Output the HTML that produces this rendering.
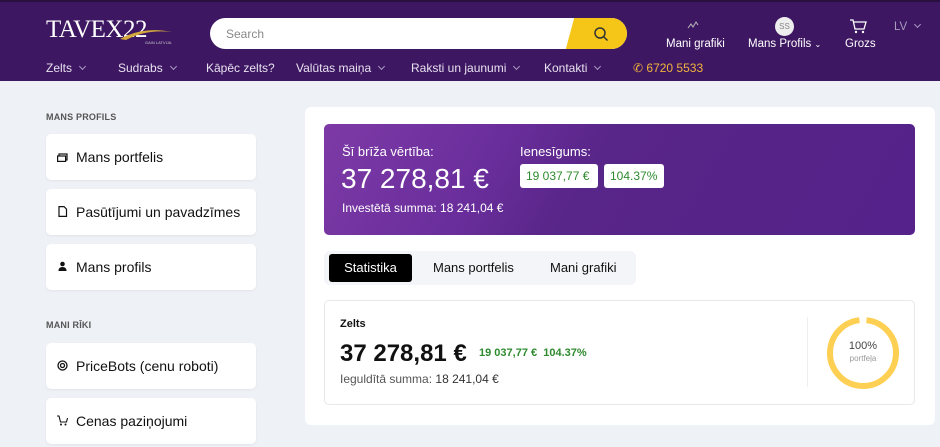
<!DOCTYPE html>
<html><head><meta charset="utf-8"><style>
*{box-sizing:border-box;margin:0;padding:0}
body{width:940px;height:447px;overflow:hidden;background:#eef1f6;font-family:"Liberation Sans",sans-serif;position:relative;color:#111}
.hdr{position:absolute;left:0;top:0;width:940px;height:81px;background:#3e1762;border-top:2px solid #2a1040}
.abs{position:absolute}
.w{color:#fff}
.nav{position:absolute;top:59px;font-size:12px;color:#e8e2f0}
.chev{display:inline-block;width:5px;height:5px;border-right:1px solid #a99cc0;border-bottom:1px solid #a99cc0;transform:rotate(45deg);margin-left:8px;vertical-align:3px}
.card{position:absolute;left:46px;width:210px;height:46px;background:#fff;border-radius:5px;box-shadow:0 1px 2px rgba(0,0,0,.06);font-size:14px;line-height:46px;padding-left:30px;color:#111}
.ic{position:absolute;left:11px;top:17px;width:11px;height:11px}
.lbl{position:absolute;left:46px;font-size:9px;font-weight:bold;color:#555;letter-spacing:.2px}
.tag{position:absolute;top:164px;height:24px;background:#fff;border-radius:3px;color:#2e8b2e;font-size:12px;line-height:24px;padding:0 6px}
</style></head><body>
<div class="hdr">
 <div class="abs w" style="left:46px;top:14px;font-family:'Liberation Serif',serif;font-size:25px;letter-spacing:-.5px">TAVEX22</div>
 <svg class="abs" style="left:118px;top:24px" width="56" height="16"><path d="M2 13 Q25 0 54 6 Q28 3 8 14Z" fill="#d3a93c"/></svg>
 <div class="abs" style="left:145px;top:38px;font-size:4px;color:#ccc">GAIN LATVIJA</div>
 <div class="abs" style="left:210px;top:16px;width:417px;height:31px;background:#fff;border-radius:16px;overflow:hidden">
  <div class="abs" style="left:16px;top:9px;font-size:12px;color:#888">Search</div>
  <div class="abs" style="left:360px;top:0;width:70px;height:31px;background:#f5c518;transform:skewX(-15deg)"></div>
  <svg class="abs" style="left:383px;top:8px" width="16" height="16"><circle cx="7" cy="7" r="5" fill="none" stroke="#333" stroke-width="1.5"/><path d="M11 11l3.5 3.5" stroke="#333" stroke-width="1.5"/></svg>
 </div>
 <svg class="abs" style="left:687px;top:19px" width="12" height="8"><path d="M1 7l3-4 2 3 3-5 2 3" fill="none" stroke="#bbb" stroke-width="1"/></svg>
 <div class="abs w" style="left:666px;top:36px;font-size:11.5px">Mani grafiki</div>
 <div class="abs" style="left:775px;top:15px;width:19px;height:19px;border-radius:50%;background:#eee;color:#888;font-size:8px;text-align:center;line-height:19px">SS</div>
 <div class="abs w" style="left:748px;top:36px;font-size:11.5px">Mans Profils <span style="font-size:8px">⌄</span></div>
 <svg class="abs" style="left:849px;top:16px" width="18" height="16"><path d="M1 2h3l2 9h9l2-7H5" fill="none" stroke="#fff" stroke-width="1.3"/><circle cx="7" cy="14" r="1.2" fill="#fff"/><circle cx="14" cy="14" r="1.2" fill="#fff"/></svg>
 <div class="abs w" style="left:845px;top:36px;font-size:11.5px">Grozs</div>
 <div class="abs" style="left:894px;top:19px;font-size:11.5px;color:#a99cc0">LV<span class="chev"></span></div>
 <div class="nav" style="left:46px">Zelts<span class="chev"></span></div>
 <div class="nav" style="left:118px">Sudrabs<span class="chev"></span></div>
 <div class="nav" style="left:206px">Kāpēc zelts?</div>
 <div class="nav" style="left:296px">Valūtas maiņa<span class="chev"></span></div>
 <div class="nav" style="left:411px">Raksti un jaunumi<span class="chev"></span></div>
 <div class="nav" style="left:544px">Kontakti<span class="chev"></span></div>
 <div class="nav" style="left:633px;color:#f0b43c">✆ 6720 5533</div>
</div>

<div class="lbl" style="top:112px">MANS PROFILS</div>
<div class="card" style="top:134px"><svg class="ic" viewBox="0 0 11 11"><rect x="2" y="3" width="8" height="6" fill="none" stroke="#111" stroke-width="1.2"/><rect x="0.6" y="5" width="8" height="5.4" fill="#fff" stroke="#111" stroke-width="1.2"/></svg>Mans portfelis</div>
<div class="card" style="top:189px"><svg class="ic" viewBox="0 0 11 11"><path d="M2 .6h5l2.5 2.5v7.3H2z" fill="none" stroke="#111" stroke-width="1.2"/></svg>Pasūtījumi un pavadzīmes</div>
<div class="card" style="top:244px"><svg class="ic" viewBox="0 0 11 11"><circle cx="5.5" cy="3" r="2.3" fill="#111"/><path d="M1.5 10q0-4 4-4t4 4z" fill="#111"/></svg>Mans profils</div>
<div class="lbl" style="top:320px">MANI RĪKI</div>
<div class="card" style="top:343px"><svg class="ic" viewBox="0 0 11 11"><circle cx="5.5" cy="5.5" r="4.5" fill="none" stroke="#111" stroke-width="1.3"/><circle cx="5.5" cy="5.5" r="2" fill="none" stroke="#111" stroke-width="1.3"/></svg>PriceBots (cenu roboti)</div>
<div class="card" style="top:398px"><svg class="ic" viewBox="0 0 11 11"><path d="M0 1h2l1.5 6h6l1-4" fill="none" stroke="#111" stroke-width="1.1"/><circle cx="4" cy="9.5" r="1" fill="#111"/><circle cx="8.5" cy="9.5" r="1" fill="#111"/></svg>Cenas paziņojumi</div>

<div class="abs" style="left:305px;top:107px;width:630px;height:318px;background:#fff;border-radius:6px"></div>
<div class="abs" style="left:324px;top:124px;width:591px;height:111px;border-radius:5px;background:linear-gradient(120deg,#7d3aa6 0%,#6a2e9c 28%,#582588 45%,#54228a 100%)"></div>
<div class="abs w" style="left:342px;top:144px;font-size:13px">Šī brīža vērtība:</div>
<div class="abs w" style="left:341px;top:163px;font-size:28px">37 278,81 €</div>
<div class="abs w" style="left:342px;top:201px;font-size:12px">Investētā summa: 18 241,04 €</div>
<div class="abs w" style="left:520px;top:144px;font-size:13px">Ienesīgums:</div>
<div class="tag" style="left:520px;width:78px">19 037,77 €</div>
<div class="tag" style="left:604px;width:60px">104.37%</div>

<div class="abs" style="left:324px;top:251px;width:312px;height:34px;background:#f4f5f8;border-radius:6px"></div>
<div class="abs" style="left:329px;top:254px;width:83px;height:28px;background:#000;border-radius:3px;color:#fff;font-size:13px;text-align:center;line-height:28px">Statistika</div>
<div class="abs" style="left:433px;top:260px;font-size:13px">Mans portfelis</div>
<div class="abs" style="left:550px;top:260px;font-size:13px">Mani grafiki</div>

<div class="abs" style="left:324px;top:300px;width:591px;height:105px;border:1px solid #e8e8ec;border-radius:5px"></div>
<div class="abs" style="left:340px;top:318px;font-size:11px;font-weight:bold">Zelts</div>
<div class="abs" style="left:340px;top:340px;font-size:24px;font-weight:bold">37 278,81 €</div>
<div class="abs" style="left:479px;top:347px;font-size:11px;color:#2e8b2e;font-weight:bold">19 037,77 €&nbsp;&nbsp;104.37%</div>
<div class="abs" style="left:340px;top:372px;font-size:12px;color:#555">Ieguldītā summa: <b style="color:#333;font-weight:normal">18 241,04 €</b></div>
<div class="abs" style="left:807px;top:317px;width:1px;height:70px;background:#eee"></div>
<svg class="abs" style="left:826px;top:316px" width="74" height="74"><circle cx="37" cy="37" r="33" fill="none" stroke="#fdd053" stroke-width="6" stroke-dasharray="200 8" transform="rotate(-84 37 37)"/></svg>
<div class="abs" style="left:826px;top:340px;width:74px;text-align:center;font-size:11px;color:#444">100%</div>
<div class="abs" style="left:826px;top:354px;width:74px;text-align:center;font-size:8px;color:#999">portfeļa</div>
</body></html>
